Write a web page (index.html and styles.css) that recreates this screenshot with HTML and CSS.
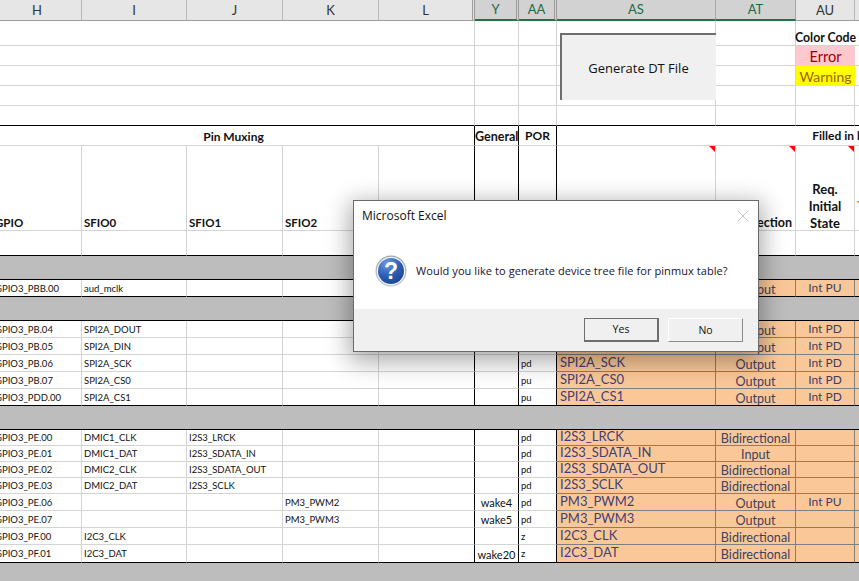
FILE: index.html
```html
<!DOCTYPE html>
<html lang="en">
<head>
<meta charset="utf-8">
<title>Pinmux</title>
<link rel="stylesheet" href="styles.css">
</head>
<body>
<main class="sheet">
<table class="grid">
<colgroup><col class="c-h"><col class="c-i"><col class="c-j"><col class="c-k"><col class="c-l"><col class="c-y"><col class="c-aa"><col class="c-as"><col class="c-at"><col class="c-au"><col class="c-av"></colgroup>
<thead>
<tr class="h21">
<th class="col">H</th><th class="col">I</th><th class="col">J</th><th class="col">K</th><th class="col gap">L</th>
<th class="col sel gap">Y</th><th class="col sel gap">AA</th><th class="col sel">AS</th><th class="col sel">AT</th><th class="col">AU</th><th class="col">AV</th>
</tr>
</thead>
<tbody>
<tr class="h25"><td colspan="5"></td><td></td><td></td><td></td><td></td><td class="ctr b code">Color Code</td><td></td></tr>
<tr class="h20"><td colspan="5"></td><td></td><td></td><td></td><td></td><td class="err">Error</td><td></td></tr>
<tr class="h20"><td colspan="5"></td><td></td><td></td><td></td><td></td><td class="warn">Warning</td><td></td></tr>
<tr class="h20"><td colspan="5"></td><td></td><td></td><td></td><td></td><td></td><td></td></tr>
<tr class="h20 btm"><td colspan="5"></td><td></td><td></td><td></td><td></td><td></td><td></td></tr>
<tr class="h20"><td colspan="5" class="ctr b sec low bk">Pin Muxing</td><td class="ctr b sec low bk gen">General</td><td class="ctr b sec bk">POR</td><td colspan="4" class="ctr b sec">Filled in by Customer</td></tr>
<tr class="h85 heads">
<td>GPIO</td><td>SFIO0</td><td>SFIO1</td><td>SFIO2</td><td class="bk">SFIO3</td><td class="bk"></td><td class="bk"></td>
<td class="mark">Customer Usage</td><td class="mark ctr dirh">Pin Direction</td><td class="mark ctr tall"><div class="stack">Req.<br>Initial<br>State</div></td><td class="side">Type</td>
</tr>
<tr class="h25 btm"><td></td><td></td><td></td><td></td><td class="bk"></td><td class="bk"></td><td class="bk"></td><td></td><td></td><td></td><td></td></tr>
<tr class="h24 btm gray"><td colspan="11"></td></tr>
<tr class="h17 btm"><td>GPIO3_PBB.00</td><td>aud_mclk</td><td></td><td></td><td class="bk"></td><td class="bk"></td><td class="bk">pd</td><td class="in nm">AUD_MCLK</td><td class="in dir">Output</td><td class="in">Int PU</td><td class="in"></td></tr>
<tr class="h24 btm gray"><td colspan="11"></td></tr>
<tr class="h17"><td>GPIO3_PB.04</td><td>SPI2A_DOUT</td><td></td><td></td><td class="bk"></td><td class="bk"></td><td class="bk">pd</td><td class="in nm">SPI2A_DOUT</td><td class="in dir">Output</td><td class="in">Int PD</td><td class="in"></td></tr>
<tr class="h17"><td>GPIO3_PB.05</td><td>SPI2A_DIN</td><td></td><td></td><td class="bk"></td><td class="bk"></td><td class="bk">pd</td><td class="in nm">SPI2A_DIN</td><td class="in dir">Output</td><td class="in">Int PD</td><td class="in"></td></tr>
<tr class="h17"><td>GPIO3_PB.06</td><td>SPI2A_SCK</td><td></td><td></td><td class="bk"></td><td class="bk"></td><td class="bk">pd</td><td class="in nm">SPI2A_SCK</td><td class="in dir">Output</td><td class="in">Int PD</td><td class="in"></td></tr>
<tr class="h17"><td>GPIO3_PB.07</td><td>SPI2A_CS0</td><td></td><td></td><td class="bk"></td><td class="bk"></td><td class="bk">pu</td><td class="in nm">SPI2A_CS0</td><td class="in dir">Output</td><td class="in">Int PD</td><td class="in"></td></tr>
<tr class="h17 btm"><td>GPIO3_PDD.00</td><td>SPI2A_CS1</td><td></td><td></td><td class="bk"></td><td class="bk"></td><td class="bk">pu</td><td class="in nm">SPI2A_CS1</td><td class="in dir">Output</td><td class="in">Int PD</td><td class="in"></td></tr>
<tr class="h24 btm gray"><td colspan="11"></td></tr>
<tr class="h16"><td>GPIO3_PE.00</td><td>DMIC1_CLK</td><td>I2S3_LRCK</td><td></td><td class="bk"></td><td class="bk"></td><td class="bk">pd</td><td class="in nm">I2S3_LRCK</td><td class="in dir">Bidirectional</td><td class="in"></td><td class="in"></td></tr>
<tr class="h16"><td>GPIO3_PE.01</td><td>DMIC1_DAT</td><td>I2S3_SDATA_IN</td><td></td><td class="bk"></td><td class="bk"></td><td class="bk">pd</td><td class="in nm">I2S3_SDATA_IN</td><td class="in dir">Input</td><td class="in"></td><td class="in"></td></tr>
<tr class="h16"><td>GPIO3_PE.02</td><td>DMIC2_CLK</td><td>I2S3_SDATA_OUT</td><td></td><td class="bk"></td><td class="bk"></td><td class="bk">pd</td><td class="in nm">I2S3_SDATA_OUT</td><td class="in dir">Bidirectional</td><td class="in"></td><td class="in"></td></tr>
<tr class="h16"><td>GPIO3_PE.03</td><td>DMIC2_DAT</td><td>I2S3_SCLK</td><td></td><td class="bk"></td><td class="bk"></td><td class="bk">pd</td><td class="in nm">I2S3_SCLK</td><td class="in dir">Bidirectional</td><td class="in"></td><td class="in"></td></tr>
<tr class="h17"><td>GPIO3_PE.06</td><td></td><td></td><td>PM3_PWM2</td><td class="bk"></td><td class="bk ctr wk">wake4</td><td class="bk">pd</td><td class="in nm">PM3_PWM2</td><td class="in dir">Output</td><td class="in">Int PU</td><td class="in"></td></tr>
<tr class="h17"><td>GPIO3_PE.07</td><td></td><td></td><td>PM3_PWM3</td><td class="bk"></td><td class="bk ctr wk">wake5</td><td class="bk">pd</td><td class="in nm">PM3_PWM3</td><td class="in dir">Output</td><td class="in"></td><td class="in"></td></tr>
<tr class="h17"><td>GPIO3_PF.00</td><td>I2C3_CLK</td><td></td><td></td><td class="bk"></td><td class="bk"></td><td class="bk">z</td><td class="in nm">I2C3_CLK</td><td class="in dir">Bidirectional</td><td class="in"></td><td class="in"></td></tr>
<tr class="h18 btm"><td>GPIO3_PF.01</td><td>I2C3_DAT</td><td></td><td></td><td class="bk"></td><td class="bk ctr wk">wake20</td><td class="bk">z</td><td class="in nm">I2C3_DAT</td><td class="in dir tight">Bidirectional</td><td class="in"></td><td class="in"></td></tr>
<tr class="h24 gray"><td colspan="11"></td></tr>
</tbody>
</table>

<button class="gen-btn" type="button">Generate DT File</button>

<section class="dialog" role="dialog" aria-label="Microsoft Excel">
<header class="dlg-title">
<span>Microsoft Excel</span>
<svg class="dlg-close" width="12" height="12" viewBox="0 0 12 12" aria-hidden="true"><path d="M1 1L11 11M11 1L1 11" stroke="#c4c4c4" stroke-width="1" fill="none"/></svg>
</header>
<div class="dlg-body">
<svg class="dlg-icon" width="32" height="32" viewBox="0 0 32 32" aria-hidden="true">
<defs>
<linearGradient id="ring" x1="0" y1="0" x2="0" y2="1"><stop offset="0" stop-color="#9aa3ad"/><stop offset="1" stop-color="#c9ced3"/></linearGradient>
<radialGradient id="ball" cx="0.35" cy="0.2" r="0.95"><stop offset="0" stop-color="#6d9be0"/><stop offset="0.55" stop-color="#2a5cb0"/><stop offset="1" stop-color="#173f8e"/></radialGradient>
</defs>
<circle cx="16" cy="16" r="15.5" fill="url(#ring)"/>
<circle cx="16" cy="16" r="14.2" fill="#f2f4f6"/>
<circle cx="16" cy="16" r="13" fill="url(#ball)"/>
<text class="q" x="16" y="24" text-anchor="middle">?</text>
</svg>
<p class="dlg-msg">Would you like to generate device tree file for pinmux table?</p>
</div>
<footer class="dlg-foot">
<button class="dlg-btn def" type="button">Yes</button>
<button class="dlg-btn" type="button">No</button>
</footer>
</section>
</main>
</body>
</html>
```
FILE: styles.css
```css
html, body { margin: 0; padding: 0; height: 100%; background: #fff; overflow: hidden; }
.sheet { position: relative; width: 859px; height: 581px; overflow: hidden; }

.grid {
  table-layout: fixed;
  border-collapse: separate;
  border-spacing: 0;
  width: 1188px;
  margin-left: -7px;
  font: 9.5px/1 "Lato", "Liberation Sans", sans-serif;
  color: #111;
}
.c-h { width: 89px; } .c-i { width: 105px; } .c-j { width: 96px; } .c-k { width: 96px; } .c-l { width: 96px; }
.c-y { width: 44px; } .c-aa { width: 38px; } .c-as { width: 159px; } .c-at { width: 80px; } .c-au { width: 59px; } .c-av { width: 326px; }

.h16 { height: 16px; } .h17 { height: 17px; } .h18 { height: 18px; } .h20 { height: 20px; } .h21 { height: 21px; }
.h24 { height: 24px; } .h25 { height: 25px; } .h85 { height: 85px; }

.grid td {
  box-sizing: border-box;
  padding: 0 0 0 2px;
  border-right: 1px solid #d4d4d4;
  border-bottom: 1px solid #d4d4d4;
  white-space: nowrap;
  overflow: hidden;
  vertical-align: middle;
}
.grid .h17 td, .grid .h18 td { padding-top: 1px; }
.grid .col {
  box-sizing: border-box;
  padding: 0;
  background: #e6e6e6;
  border-right: 1px solid #b8b8b8;
  border-bottom: 1px solid #9c9c9c;
  font: 400 13px/1 "Lato", "Liberation Sans", sans-serif;
  color: #333;
  text-align: center;
}
.grid .sel {
  background: #d2d2d2;
  color: #1f6b46;
  border-bottom: 2px solid #217346;
  border-right-color: #a8a8a8;
}
.grid .gap { border-right: 3px double #9c9c9c; }

.grid .btm td { border-bottom-color: #000; }
.grid td.bk { border-right-color: #000; }
.grid td.ctr { text-align: center; padding-left: 0; }
.grid td.b { font-weight: 700; font-size: 11.5px; }
.grid td.sec { font-size: 12px; padding-top: 1px; }
.grid td.low { padding-top: 3px; }
.grid td.gen { font-size: 12.5px; padding-right: 1px; }
.grid td.code { font-size: 12.3px; vertical-align: bottom; padding-bottom: 1px; border-right-color: transparent; overflow: visible; text-indent: -1px; }
.grid td.wk { font-size: 11px; }

.grid td.err { background: #ffc7ce; color: #9c0006; text-align: center; padding: 2px 0 0; font-size: 14.5px; border: 0; }
.grid td.warn { background: #ffff00; color: #9c6500; text-align: center; padding: 2px 0 0; font-size: 14px; border: 0; }

.heads td { vertical-align: bottom; font-weight: 700; font-size: 11.5px; line-height: 14px; position: relative; }
.grid .heads td { padding-top: 0; padding-bottom: 0; }
.grid .heads td.dirh { font-size: 12.5px; }
.grid .heads td.tall { font-size: 13px; vertical-align: top; padding-top: 35px; }
.stack { height: 49px; line-height: 17px; }
.mark::after {
  content: "";
  position: absolute;
  top: 0;
  right: 0;
  border-top: 6px solid #f00;
  border-left: 6px solid transparent;
}
.grid .heads td.side { color: #c68a00; font-size: 13px; padding: 0 0 17px 2px; border-right: 0; }

.gray td { background: #bdbdbd; border-right: 0; }

.grid td.in {
  background: #fac898;
  color: #3f3f5e;
  border-right-color: #7f7f7f;
  border-bottom-color: #7f7f7f;
  text-align: center;
  padding: 0;
  font-size: 12px;
}
.grid td.in.dir { font-size: 12.6px; line-height: 11px; padding-top: 3px; }
.grid .h16 td.in.dir, .grid td.in.dir.tight { padding-top: 1px; }
.grid td.in.nm { text-align: left; padding: 0 0 2px 3px; font-size: 13px; color: #3f3f76; }
.grid .btm td.in { border-bottom-color: #000; }

.gen-btn {
  position: absolute;
  left: 560px;
  top: 33px;
  width: 156px;
  height: 67px;
  box-sizing: border-box;
  padding: 2px 1px 0 0;
  background: #f0f0f0;
  border: 0;
  border-top: 2px solid #6e6e6e;
  border-left: 2px solid #6e6e6e;
  font: 13px/1 "Open Sans", "Liberation Sans", sans-serif;
  color: #111;
}

.dialog {
  position: absolute;
  left: 353px;
  top: 200px;
  width: 406px;
  height: 152px;
  box-sizing: border-box;
  display: flex;
  flex-direction: column;
  background: #fff;
  border: 1px solid #6a6a6a;
  box-shadow: 0 6px 22px 4px rgba(0,0,0,.32);
  font: 11px/1 "Open Sans", "Liberation Sans", sans-serif;
  color: #111;
}
.dlg-title { display: flex; justify-content: space-between; align-items: flex-start; height: 35px; padding: 9px 9px 0 8px; font-size: 12px; box-sizing: border-box; }
.dlg-close { margin-top: 0; }
.dlg-body { flex: 1; display: flex; align-items: center; gap: 9px; padding: 0 0 4px 21px; }
.dlg-icon { flex: none; }
.q { font: 700 23px "Liberation Sans", sans-serif; fill: #fff; }
.dlg-msg { margin: 0; letter-spacing: .07px; color: #1a1030; }
.dlg-foot { height: 42px; box-sizing: border-box; display: flex; justify-content: flex-end; gap: 9px; padding: 9px 15px 0 0; background: #f0f0f0; }
.dlg-btn {
  width: 75px;
  height: 24px;
  box-sizing: border-box;
  padding: 0;
  background: #f0f0f0;
  border: 1px solid;
  border-color: #fff #8a8a8a #8a8a8a #fff;
  font: 10.5px/1 "Open Sans", "Liberation Sans", sans-serif;
  color: #111;
}
.dlg-btn.def { border: 2px solid #6e6e6e; border-top-width: 1px; border-left-width: 1px; }
```
